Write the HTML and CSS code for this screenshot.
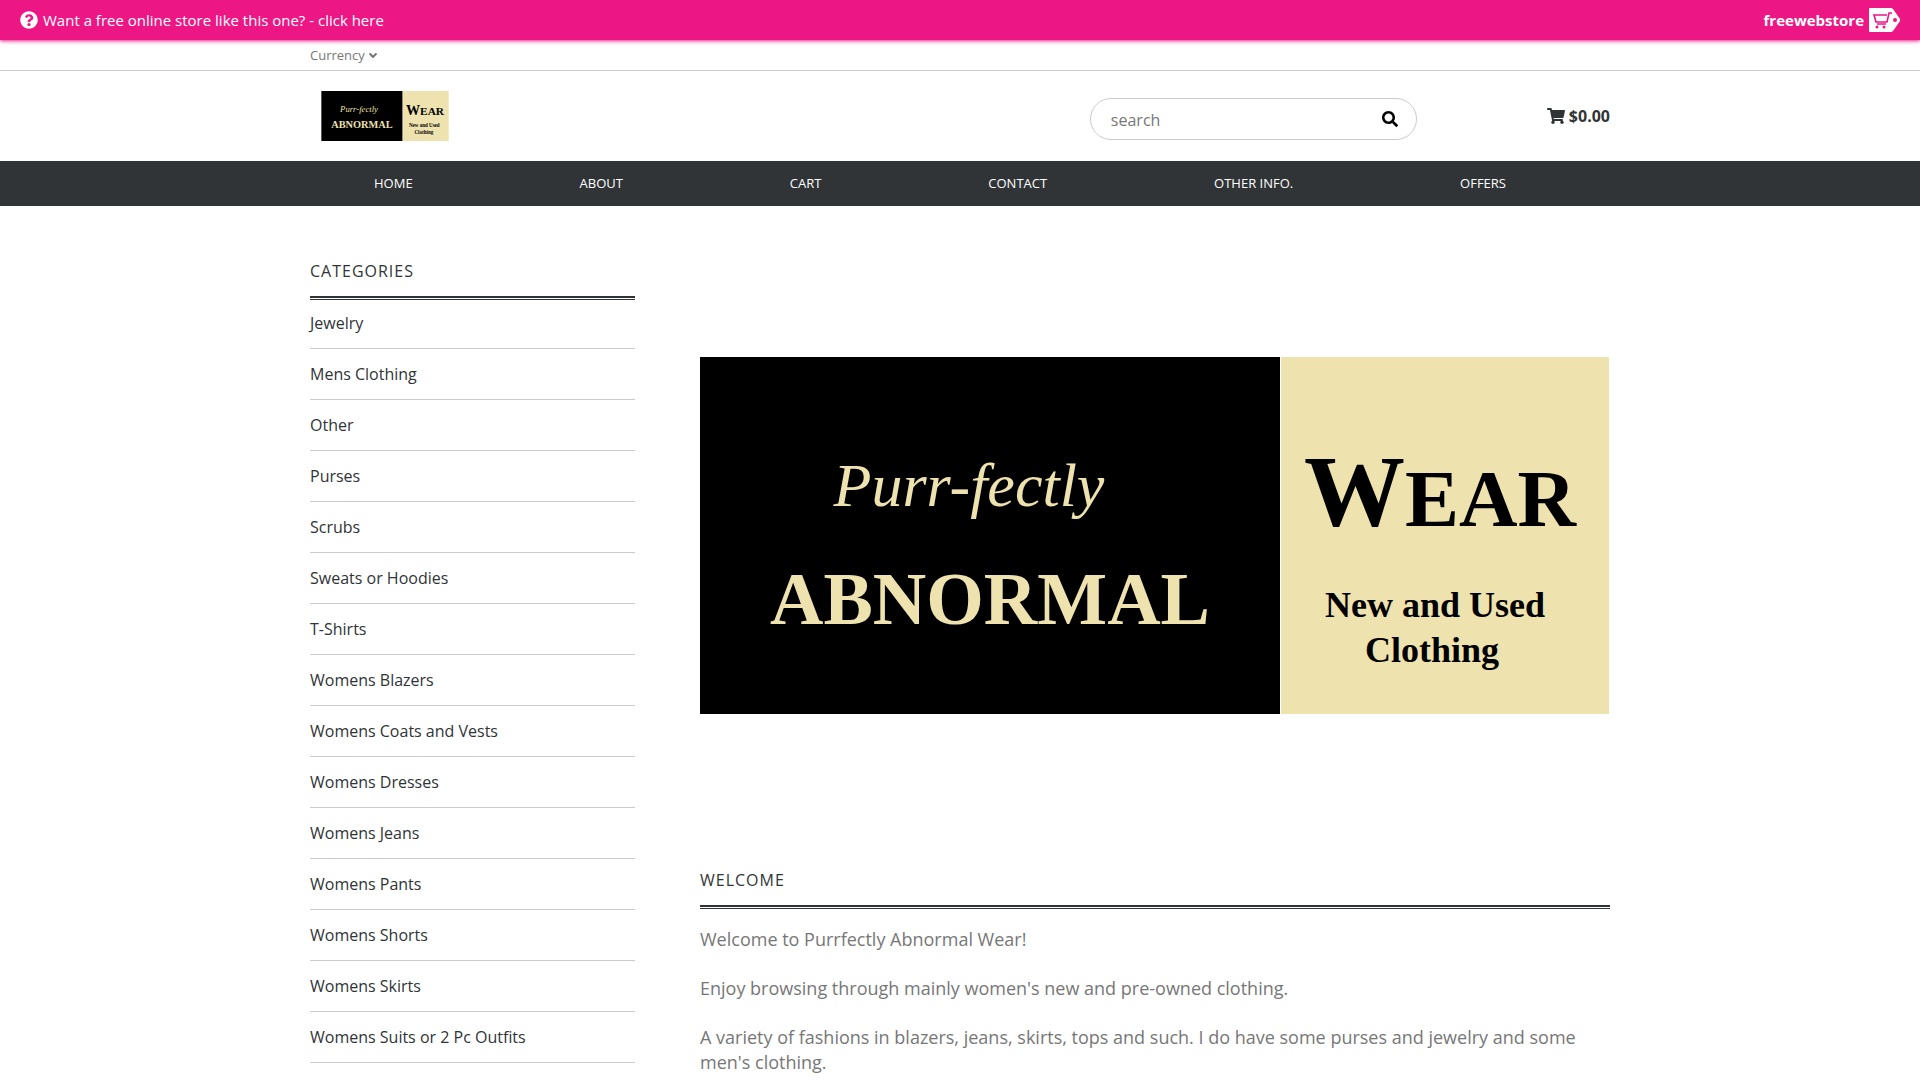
FILE: index.html
```html
<!DOCTYPE html>
<html lang="en">

<head>
  <meta charset="utf-8">
  <meta name="viewport" content="width=device-width, initial-scale=1">
  <title>Purrfectly Abnormal Wear</title>
  <link rel="stylesheet" href="styles.css">
</head>

<body>
  <div class="promo">
    <a href="#" class="promo-link">
      <svg class="icon-help" viewBox="0 0 512 512" fill="currentColor"><path d="M504 256c0 136.997-111.043 248-248 248S8 392.997 8 256C8 119.083 119.043 8 256 8s248 111.083 248 248zM262.655 90c-54.497 0-89.255 22.957-116.549 63.758-3.536 5.286-2.353 12.415 2.715 16.258l34.699 26.31c5.205 3.947 12.621 3.008 16.665-2.122 17.864-22.658 30.113-35.797 57.303-35.797 20.429 0 45.698 13.148 45.698 32.958 0 14.976-12.363 22.667-32.534 33.976C247.128 238.528 216 254.941 216 296v4c0 6.627 5.373 12 12 12h56c6.627 0 12-5.373 12-12v-1.333c0-28.462 83.186-29.647 83.186-106.667 0-58.002-60.165-102-116.531-102zM256 338c-25.365 0-46 20.635-46 46 0 25.364 20.635 46 46 46s46-20.636 46-46c0-25.365-20.635-46-46-46z"/></svg>
      Want a free online store like this one? - click here
    </a>
    <a href="#" class="promo-brand">
      freewebstore
      <svg class="icon-tag" viewBox="0 0 31 24">
        <path d="M1 0h21q1 0 2 1l7 10q.6 1 0 2l-7 10q-1 1-2 1H1q-1 0-1-1V1q0-1 1-1z" fill="#fff"/>
        <path d="M18 7H5l2 7h11l2-9h3M17 16H8" fill="none" stroke="#ec1785" stroke-width="1.600"/>
        <circle cx="8" cy="19" r="1.500" fill="#ec1785"/>
        <circle cx="15" cy="19" r="1.500" fill="#ec1785"/>
        <circle cx="26" cy="12" r="2" fill="#ec1785"/>
      </svg>
    </a>
  </div>

  <div class="topbar">
    <div class="container currency">
      <select aria-label="Currency">
        <option>Currency</option>
      </select>
      <svg class="icon-angle" viewBox="0 0 320 512" fill="currentColor"><path d="M143 352.300L7 216.300c-9.400-9.400-9.400-24.600 0-33.900l22.600-22.600c9.400-9.400 24.600-9.400 33.900 0l96.400 96.400 96.400-96.400c9.400-9.400 24.600-9.400 33.900 0l22.600 22.600c9.400 9.400 9.400 24.600 0 33.900l-136 136c-9.200 9.400-24.400 9.400-33.800 0z"/></svg>
    </div>
  </div>

  <header class="container header">
    <a href="#" class="logo" aria-label="Purrfectly Abnormal Wear">
      <svg viewBox="0 0 909 357">
        <rect width="580" height="357" fill="#000"/>
        <rect x="581" width="328" height="357" fill="#eee2ae"/>
        <text class="art-purr" x="269" y="149">Purr-fectly</text>
        <text class="art-abnormal" x="290" y="267">ABNORMAL</text>
        <text class="art-wear" x="740" y="169">W<tspan class="art-small">EAR</tspan></text>
        <text class="art-tag" x="735" y="260">New and Used</text>
        <text class="art-tag" x="732" y="305">Clothing</text>
      </svg>
    </a>
    <form class="search">
      <input type="text" placeholder="search" aria-label="search">
      <button type="button" aria-label="Search">
        <svg viewBox="0 0 512 512"><path d="M505 442.700L405.300 343c-4.500-4.500-10.600-7-17-7H372c27.600-35.300 44-79.700 44-128C416 93.100 322.900 0 208 0S0 93.100 0 208s93.100 208 208 208c48.300 0 92.700-16.400 128-44v16.300c0 6.400 2.500 12.500 7 17l99.700 99.700c9.400 9.400 24.600 9.400 33.900 0l28.300-28.300c9.400-9.400 9.400-24.600.1-34zM208 336c-70.700 0-128-57.200-128-128 0-70.700 57.200-128 128-128 70.700 0 128 57.200 128 128 0 70.700-57.200 128-128 128z"/></svg>
      </button>
    </form>
    <a href="#" class="cart">
      <svg viewBox="0 0 576 512" fill="currentColor"><path d="M528.12 301.319l47.273-208C578.806 78.301 567.391 64 551.99 64H159.208l-9.166-44.810C147.758 8.021 137.930 0 126.529 0H24C10.745 0 0 10.745 0 24v16c0 13.255 10.745 24 24 24h69.883l70.248 343.435C147.325 417.100 136 435.222 136 456c0 30.928 25.072 56 56 56s56-25.072 56-56c0-15.674-6.447-29.835-16.824-40h209.647C430.447 426.165 424 440.326 424 456c0 30.928 25.072 56 56 56s56-25.072 56-56c0-22.172-12.888-41.332-31.579-50.405l5.517-24.276c3.413-15.018-8.002-29.319-23.403-29.319H218.117l-6.545-32h293.145c11.206 0 20.920-7.754 23.403-18.681z"/></svg>
      $0.00
    </a>
  </header>

  <nav class="nav">
    <div class="container nav-links">
      <a href="#">HOME</a>
      <a href="#">ABOUT</a>
      <a href="#">CART</a>
      <a href="#">CONTACT</a>
      <a href="#">OTHER INFO.</a>
      <a href="#">OFFERS</a>
    </div>
  </nav>

  <div class="container content">
    <aside class="sidebar">
      <h2>CATEGORIES</h2>
      <ul>
        <li><a href="#">Jewelry</a></li>
        <li><a href="#">Mens Clothing</a></li>
        <li><a href="#">Other</a></li>
        <li><a href="#">Purses</a></li>
        <li><a href="#">Scrubs</a></li>
        <li><a href="#">Sweats or Hoodies</a></li>
        <li><a href="#">T-Shirts</a></li>
        <li><a href="#">Womens Blazers</a></li>
        <li><a href="#">Womens Coats and Vests</a></li>
        <li><a href="#">Womens Dresses</a></li>
        <li><a href="#">Womens Jeans</a></li>
        <li><a href="#">Womens Pants</a></li>
        <li><a href="#">Womens Shorts</a></li>
        <li><a href="#">Womens Skirts</a></li>
        <li><a href="#">Womens Suits or 2 Pc Outfits</a></li>
      </ul>
    </aside>
    <main>
      <div class="slider">
        <svg viewBox="0 0 910 357">
          <rect width="580" height="357" fill="#000"/>
          <rect x="581" width="328" height="357" fill="#eee2ae"/>
          <text class="art-purr" x="269" y="149">Purr-fectly</text>
          <text class="art-abnormal" x="290" y="267">ABNORMAL</text>
          <text class="art-wear" x="740" y="169">W<tspan class="art-small">EAR</tspan></text>
          <text class="art-tag" x="735" y="260">New and Used</text>
          <text class="art-tag" x="732" y="305">Clothing</text>
        </svg>
      </div>
      <h2>WELCOME</h2>
      <div class="welcome">
        <p>Welcome to Purrfectly Abnormal Wear!</p>
        <p>Enjoy browsing through mainly women's new and pre-owned clothing.</p>
        <p>A variety of fashions in blazers, jeans, skirts, tops and such. I do have some purses and jewelry and some men's clothing.</p>
      </div>
    </main>
  </div>
</body>

</html>
```

FILE: styles.css
```css
* {
  box-sizing: border-box;
}

body {
  margin: 0;
  background-color: #fff;
  color: #313437;
  font-family: "Open Sans", sans-serif;
  font-size: 16px;
}

a {
  color: inherit;
  text-decoration: none;
}

svg {
  display: block;
}

.container {
  width: 100%;
  max-width: 1300px;
  margin: 0 auto;
}

/* promo bar */
.promo {
  position: relative;
  display: flex;
  justify-content: space-between;
  align-items: center;
  height: 40px;
  padding: 0 20px;
  background-color: #ec1785;
  box-shadow: 0 1px 4px #ec1785;
  color: #fff;
  font-size: 15px;
}

.promo-link,
.promo-brand {
  display: flex;
  align-items: center;
  gap: 5px;
}

.promo-brand {
  font-weight: bold;
}

.icon-help {
  width: 18px;
  height: 18px;
}

.icon-tag {
  width: 31px;
  height: 24px;
}

/* currency */
.topbar {
  height: 31px;
  border-bottom: 1px solid #ccc;
}

.currency {
  display: flex;
  align-items: center;
  gap: 4px;
  height: 30px;
  color: #777;
}

.currency select {
  appearance: none;
  field-sizing: content;
  padding: 0;
  border: none;
  background: none;
  color: inherit;
  font: inherit;
  font-size: 13px;
}

.icon-angle {
  width: 8px;
  height: 13px;
}

/* header */
.header {
  display: flex;
  height: 90px;
  padding-top: 20px;
}

.logo {
  margin-left: 11px;
}

.logo svg {
  width: 128px;
  height: 50px;
}

.search {
  display: flex;
  align-items: center;
  width: 327px;
  height: 42px;
  margin: 7px 130px 0 auto;
  padding: 0 18px 0 20px;
  border: 1px solid #ccc;
  border-radius: 21px;
}

.search input {
  flex: 1;
  min-width: 0;
  padding: 2px 0 0;
  border: none;
  outline: none;
  background: none;
  font: inherit;
}

.search input::placeholder {
  color: #777;
}

.search button {
  padding: 0;
  border: none;
  background: none;
  cursor: pointer;
}

.search button svg {
  width: 16px;
  height: 16px;
}

.cart {
  display: flex;
  align-items: center;
  gap: 4px;
  height: 50px;
  font-weight: bold;
}

.cart svg {
  width: 18px;
  height: 16px;
}

/* nav */
.nav {
  background-color: #313437;
}

.nav-links {
  display: flex;
  justify-content: space-between;
  padding: 0 104px 0 64px;
  color: #fff;
  font-size: 13px;
  line-height: 45px;
}

/* content */
.content {
  display: flex;
  gap: 5%;
  padding-top: 50px;
}

.sidebar {
  width: 25%;
}

main {
  width: 70%;
}

/* thick line with a thin one under it */
h2 {
  margin: 0 0 2px;
  padding-bottom: 10px;
  border-bottom: 2px solid #313437;
  box-shadow: 0 1px #fff, 0 2px #313437;
  font-size: 16px;
  font-weight: normal;
  line-height: 30px;
  letter-spacing: 1px;
}

ul {
  margin: 0;
  padding: 0;
  list-style: none;
}

li {
  padding: 14px 0;
  border-bottom: 1px solid #ccc;
  line-height: 22px;
}

li:first-child {
  padding-top: 12px;
}

li a {
  display: block;
}

.slider {
  margin-bottom: 50px;
  padding: 101px 0;
}

.slider svg {
  width: 100%;
}

.welcome {
  padding-top: 18px;
  color: #777;
  font-size: 18px;
  line-height: 25px;
}

.welcome p {
  margin: 0 0 24px;
}

.welcome p:last-child {
  margin-bottom: 0;
}

/* banner artwork */
.art-purr,
.art-abnormal,
.art-wear,
.art-tag {
  font-family: "Liberation Serif", serif;
  font-weight: bold;
  text-anchor: middle;
}

.art-purr {
  fill: #eee2ae;
  font-size: 62px;
  font-style: italic;
  font-weight: normal;
}

.art-abnormal {
  fill: #eee2ae;
  font-size: 74px;
}

.art-wear {
  font-size: 101px;
}

.art-small {
  font-size: 81px;
}

.art-tag {
  font-size: 36px;
}
```
